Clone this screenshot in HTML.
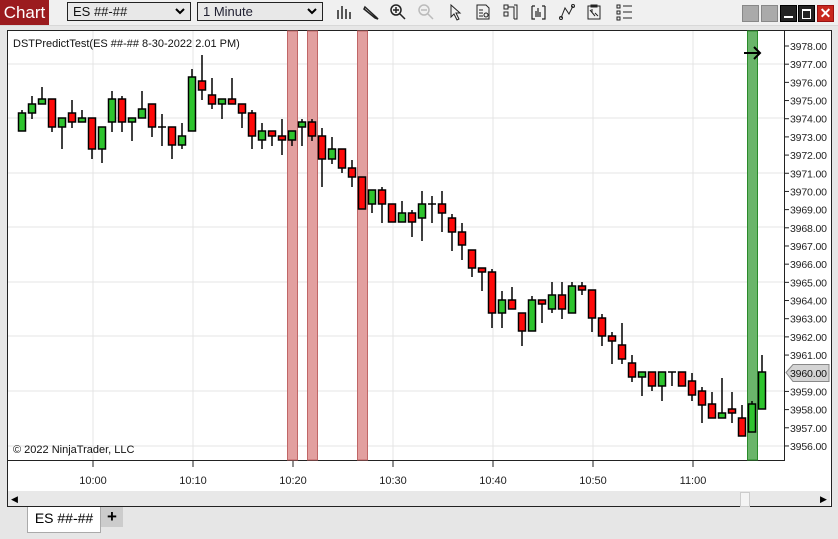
<!DOCTYPE html>
<html><head><meta charset="utf-8"><style>
body{margin:0;width:838px;height:539px;background:#e6e6e6;font-family:"Liberation Sans",sans-serif;overflow:hidden;position:relative}
.tb{position:absolute;left:0;top:0;width:838px;height:25px;background:#f0f0f0;border-bottom:1px solid #d8d8d8}
.chart{position:absolute;left:0;top:0;width:49px;height:25px;background:#9b1b1e;color:#fff;font-size:17px;line-height:25px;text-align:center}
.dd{position:absolute;top:2px;height:17px;border:1px solid #222;background:#e8e8e8;font-size:13px;line-height:17px;padding-left:5px;box-sizing:content-box}
.dd svg{position:absolute;right:5px;top:5px}
.wb{position:absolute;top:5px;width:15px;height:15px}
</style></head><body>
<div class="tb"></div>
<div class="chart">Chart</div>
<div class="dd" style="left:67px;width:117px;color:#111">ES ##-##<svg width="10" height="7"><path d="M1 1 L5 5 L9 1" stroke="#000" stroke-width="2" fill="none"/></svg></div>
<div class="dd" style="left:197px;width:119px;color:#223">1 Minute<svg width="10" height="7"><path d="M1 1 L5 5 L9 1" stroke="#000" stroke-width="2" fill="none"/></svg></div>
<svg style="position:absolute;left:0;top:0" width="838" height="26">
<g stroke="#222" stroke-width="1.5" fill="none">
<line x1="338" y1="10" x2="338" y2="19"/><line x1="342" y1="6" x2="342" y2="19"/><line x1="346" y1="9" x2="346" y2="19"/><line x1="350" y1="12" x2="350" y2="19"/>
<path d="M365 7 L376 17 L378 19 L375 18 L364 9 Z"/>
<circle cx="396" cy="10" r="5"/><path d="M400 14 L405 19 M393 10 H399 M396 7 V13"/>
<g stroke="#bbb"><circle cx="424" cy="10" r="5"/><path d="M428 14 L433 19 M421 10 H427"/></g>
<path d="M451 5 L451 17 L454 14 L457 20 L459 19 L456 13 L460 13 Z" stroke-width="1"/>
<path d="M477 5 H486 L489 8 V19 H477 Z M479 10 H483 M479 13 H483 M479 16 H483" stroke-width="1"/><circle cx="486" cy="15" r="2" stroke-width="1"/>
<path d="M504 5 H508 V9 H504 Z M504 12 H508 V16 H504 Z M508 7 H514 V19 M514 5 H517 V19 H514" stroke-width="1"/>
<path d="M532 6 V19 H535 M545 6 V19 H542 M532 6 H535 M545 6 H542 M536 17 V11 M538 17 V8 M540 17 V12" stroke-width="1.2"/>
<path d="M561 18 L565 8 L569 14 L573 6" stroke-width="1"/><circle cx="561" cy="18" r="1.5" stroke-width="1"/><circle cx="573" cy="6" r="1.5" stroke-width="1"/>
<path d="M588 6 H600 V19 H588 Z M591 5 H597 V7 H591 Z M590 10 L595 16 M592 9 L592 12 M595 13 L598 16" stroke-width="1"/>
<path d="M617 5 H620 V8 H617 Z M617 11 H620 V14 H617 Z M617 17 H620 V20 H617 Z M623 6 H632 M623 12 H632 M623 18 H632" stroke-width="1"/>
</g></svg>
<div class="wb" style="left:742px;background:#aaa;border:1px solid #888"></div>
<div class="wb" style="left:761px;background:#aaa;border:1px solid #888"></div>
<div class="wb" style="left:780px;background:#222;border:1px solid #000"><div style="position:absolute;left:3px;top:10px;width:9px;height:2px;background:#fff"></div></div>
<div class="wb" style="left:798px;background:#222;border:1px solid #000"><div style="position:absolute;left:3px;top:3px;width:7px;height:7px;border:1px solid #fff;border-top-width:2px"></div></div>
<div class="wb" style="left:817px;background:#c8281e;border:1px solid #911;color:#fff;font-size:14px;font-weight:bold;line-height:15px;text-align:center">✕</div>

<div style="position:absolute;left:7px;top:30px;width:823px;height:475px;background:#fff;border:1px solid #222"></div>
<div style="position:absolute;left:8px;top:491px;width:822px;height:15px;background:#e8e8e8"></div>
<div style="position:absolute;left:740px;top:492px;width:8px;height:13px;background:#f4f4f4;border:1px solid #ccc"></div>
<div style="position:absolute;left:11px;top:494px;font-size:9px">&#9664;</div>
<div style="position:absolute;left:820px;top:494px;font-size:9px">&#9654;</div>

<svg style="position:absolute;left:0;top:0" width="838" height="539" font-family="Liberation Sans, sans-serif">
<g stroke="#e4e4e4" stroke-width="1">
<line x1="8" y1="64" x2="784" y2="64"/><line x1="8" y1="118" x2="784" y2="118"/><line x1="8" y1="173" x2="784" y2="173"/><line x1="8" y1="227" x2="784" y2="227"/><line x1="8" y1="282" x2="784" y2="282"/><line x1="8" y1="336" x2="784" y2="336"/><line x1="8" y1="391" x2="784" y2="391"/><line x1="8" y1="446" x2="784" y2="446"/>
<line x1="93" y1="31" x2="93" y2="460"/><line x1="193" y1="31" x2="193" y2="460"/><line x1="293" y1="31" x2="293" y2="460"/><line x1="393" y1="31" x2="393" y2="460"/><line x1="493" y1="31" x2="493" y2="460"/><line x1="593" y1="31" x2="593" y2="460"/><line x1="693" y1="31" x2="693" y2="460"/>
</g>
<line x1="8" y1="460.5" x2="784" y2="460.5" stroke="#222"/>
<line x1="784.5" y1="31" x2="784.5" y2="461" stroke="#222"/>
<g fill="#e29f9f" stroke="#c06666"><rect x="287.5" y="31" width="10" height="429"/><rect x="307.5" y="31" width="10" height="429"/><rect x="357.5" y="31" width="10" height="429"/></g>
<rect x="747.5" y="31" width="10" height="429" fill="#6ab56a" stroke="#2a8a2a"/>
<g id="c" stroke="#000" stroke-width="1.5"></g>
<g stroke="#222">
<line x1="93" y1="461" x2="93" y2="467"/><line x1="193" y1="461" x2="193" y2="467"/><line x1="293" y1="461" x2="293" y2="467"/><line x1="393" y1="461" x2="393" y2="467"/><line x1="493" y1="461" x2="493" y2="467"/><line x1="593" y1="461" x2="593" y2="467"/><line x1="693" y1="461" x2="693" y2="467"/>
</g>
<g font-size="11" fill="#222" text-anchor="middle">
<text x="93" y="484">10:00</text><text x="193" y="484">10:10</text><text x="293" y="484">10:20</text><text x="393" y="484">10:30</text><text x="493" y="484">10:40</text><text x="593" y="484">10:50</text><text x="693" y="484">11:00</text>
</g>
<g id="ax" font-size="10.5" fill="#222"></g>
<path d="M786 372.5 L793 364.5 H829 V381.5 H793 Z" fill="#d4d4d4" stroke="#888"/>
<text x="790" y="377" font-size="10.5" fill="#111" textLength="37">3960.00</text>
<path d="M744 53 H760 M754 47 L760 53 L754 59" stroke="#000" stroke-width="2" fill="none"/>
<text x="13" y="47" font-size="11" fill="#111">DSTPredictTest(ES ##-## 8-30-2022 2.01 PM)</text>
<text x="13" y="453" font-size="11" fill="#111">© 2022 NinjaTrader, LLC</text>
</svg>
<div style="position:absolute;left:27px;top:507px;width:72px;height:25px;background:#fff;border:1px solid #aaa;border-top:none;font-size:14px;line-height:23px;text-align:center">ES ##-##</div>
<div style="position:absolute;left:101px;top:507px;width:22px;height:20px;background:#ccc;font-size:17px;line-height:20px;text-align:center;font-weight:bold">+</div>
<script>
var d=[["G",113,131,110,131],["G",104,113,96,119],["G",99,104,87,104],["R",99,127,99,132],["G",118,127,118,149],["R",113,122,100,128],["G",118,122,110,122],["R",118,149,118,159],["G",127,149,127,163],["G",99,122,91,132],["R",99,122,96,132],["G",118,122,118,141],["G",109,118,91,118],["R",104,127,104,137],["D",127,127,114,146],["R",127,145,127,159],["G",136,145,123,149],["G",77,131,69,131],["R",81,90,55,100],["R",95,104,78,109],["G",99,104,99,119],["R",99,104,78,104],["R",104,113,104,128],["R",113,136,110,149],["G",131,140,123,149],["R",131,136,131,146],["R",136,140,119,155],["G",131,140,131,146],["G",122,127,119,146],["R",122,136,119,141],["R",136,159,128,187],["G",149,159,137,164],["R",149,168,149,173],["R",168,177,160,187],["R",177,209,177,209],["G",190,204,190,213],["R",190,204,187,223],["R",204,222,204,222],["G",213,222,201,222],["R",213,222,210,237],["G",204,218,191,241],["D",204,204,196,223],["R",204,213,191,232],["R",218,232,214,251],["R",232,245,223,260],["R",250,268,250,277],["R",268,272,268,291],["R",272,313,269,328],["G",300,313,291,328],["R",300,309,287,309],["R",313,331,313,346],["G",300,331,296,331],["R",300,304,300,323],["G",295,309,282,313],["R",295,309,282,319],["G",286,313,282,313],["R",286,290,282,295],["R",290,318,290,332],["R",318,336,314,346],["R",336,341,332,364],["R",345,359,323,364],["R",363,377,355,382],["G",372,377,372,396],["R",372,386,372,391],["G",372,386,372,401],["D",372,372,372,386],["R",372,386,372,386],["R",381,395,373,401],["R",391,405,387,423],["R",404,418,392,418],["G",413,418,378,418],["R",409,413,392,423],["R",418,436,405,436],["G",404,432,401,432],["G",372,409,355,409]];
var s="";d.forEach(function(c,i){var x=22+10*i;s+='<line x1="'+x+'" y1="'+c[3]+'" x2="'+x+'" y2="'+c[4]+'"/>';if(c[0]=="D")s+='<line x1="'+(x-4)+'" y1="'+c[1]+'" x2="'+(x+4)+'" y2="'+c[1]+'"/>';else s+='<rect x="'+(x-3.5)+'" y="'+c[1]+'" width="7" height="'+Math.max(c[2]-c[1],3)+'" fill="'+(c[0]=="G"?"#2ec42e":"#ff0a0a")+'"/>';});
document.getElementById("c").innerHTML=s;
var a="";for(var p=3978;p>=3956;p--){var y=46+(3978-p)*18.18;if(p==3960)continue;a+='<line x1="785" y1="'+y+'" x2="789" y2="'+y+'" stroke="#222"/><text x="790" y="'+(y+4)+'" textLength="37">'+p+'.00</text>';}
document.getElementById("ax").innerHTML=a;
</script>
</body></html>
